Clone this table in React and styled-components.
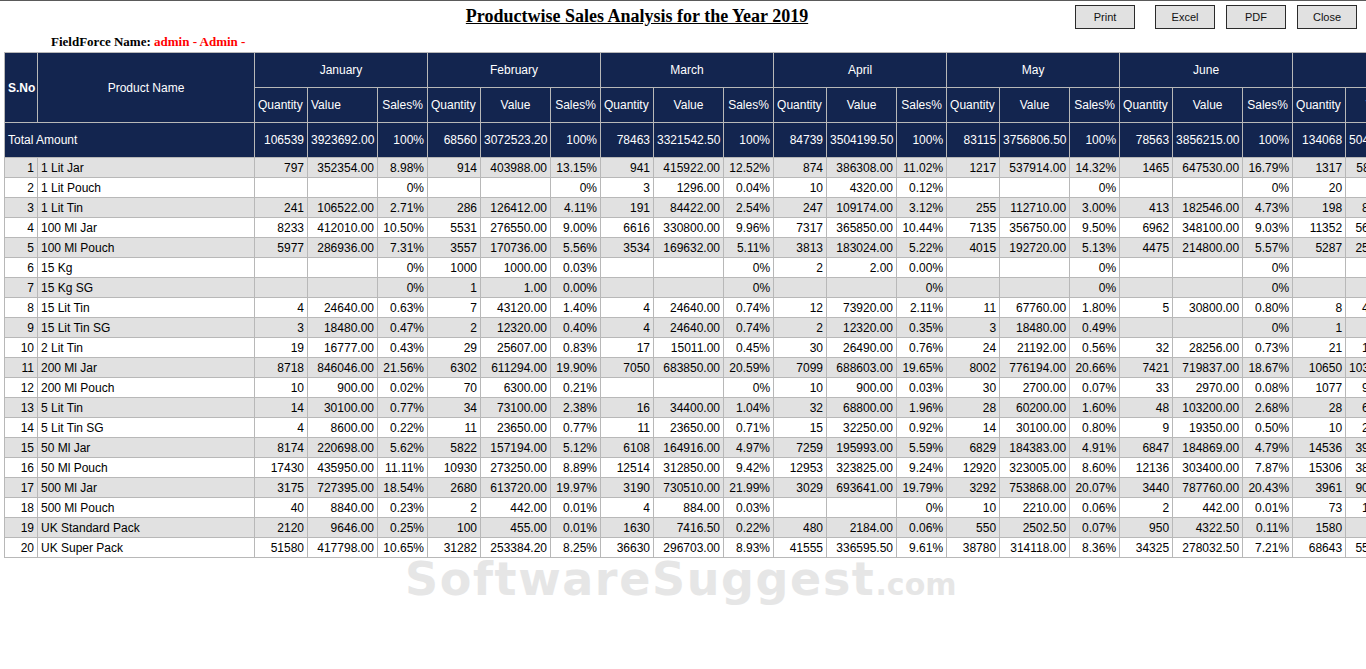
import React from 'react';
import styled, { createGlobalStyle } from 'styled-components';

const GlobalStyle = createGlobalStyle`
  html {
    overflow: hidden;
  }
  body {
    margin: 0;
    background: #ffffff;
    border-top: 1px solid #5a5a5a;
  }
`;

const MONTHS = ['January', 'February', 'March', 'April', 'May', 'June', 'July'];

const TOTALS = [
  ['106539', '3923692.00', '100%'],
  ['68560', '3072523.20', '100%'],
  ['78463', '3321542.50', '100%'],
  ['84739', '3504199.50', '100%'],
  ['83115', '3756806.50', '100%'],
  ['78563', '3856215.00', '100%'],
  ['134068', '5040398.50', '100%'],
];

const E = ['', '', '0%'];

const ROWS = [
  ['1 Lit Jar', [['797', '352354.00', '8.98%'], ['914', '403988.00', '13.15%'], ['941', '415922.00', '12.52%'], ['874', '386308.00', '11.02%'], ['1217', '537914.00', '14.32%'], ['1465', '647530.00', '16.79%'], ['1317', '582114.00', '11.55%']]],
  ['1 Lit Pouch', [E, E, ['3', '1296.00', '0.04%'], ['10', '4320.00', '0.12%'], E, E, ['20', '8640.00', '0.17%']]],
  ['1 Lit Tin', [['241', '106522.00', '2.71%'], ['286', '126412.00', '4.11%'], ['191', '84422.00', '2.54%'], ['247', '109174.00', '3.12%'], ['255', '112710.00', '3.00%'], ['413', '182546.00', '4.73%'], ['198', '87516.00', '1.74%']]],
  ['100 Ml Jar', [['8233', '412010.00', '10.50%'], ['5531', '276550.00', '9.00%'], ['6616', '330800.00', '9.96%'], ['7317', '365850.00', '10.44%'], ['7135', '356750.00', '9.50%'], ['6962', '348100.00', '9.03%'], ['11352', '567600.00', '11.26%']]],
  ['100 Ml Pouch', [['5977', '286936.00', '7.31%'], ['3557', '170736.00', '5.56%'], ['3534', '169632.00', '5.11%'], ['3813', '183024.00', '5.22%'], ['4015', '192720.00', '5.13%'], ['4475', '214800.00', '5.57%'], ['5287', '253776.00', '5.03%']]],
  ['15 Kg', [E, ['1000', '1000.00', '0.03%'], E, ['2', '2.00', '0.00%'], E, E, E]],
  ['15 Kg SG', [E, ['1', '1.00', '0.00%'], E, E, E, E, E]],
  ['15 Lit Tin', [['4', '24640.00', '0.63%'], ['7', '43120.00', '1.40%'], ['4', '24640.00', '0.74%'], ['12', '73920.00', '2.11%'], ['11', '67760.00', '1.80%'], ['5', '30800.00', '0.80%'], ['8', '49280.00', '0.98%']]],
  ['15 Lit Tin SG', [['3', '18480.00', '0.47%'], ['2', '12320.00', '0.40%'], ['4', '24640.00', '0.74%'], ['2', '12320.00', '0.35%'], ['3', '18480.00', '0.49%'], E, ['1', '6160.00', '0.12%']]],
  ['2 Lit Tin', [['19', '16777.00', '0.43%'], ['29', '25607.00', '0.83%'], ['17', '15011.00', '0.45%'], ['30', '26490.00', '0.76%'], ['24', '21192.00', '0.56%'], ['32', '28256.00', '0.73%'], ['21', '18543.00', '0.37%']]],
  ['200 Ml Jar', [['8718', '846046.00', '21.56%'], ['6302', '611294.00', '19.90%'], ['7050', '683850.00', '20.59%'], ['7099', '688603.00', '19.65%'], ['8002', '776194.00', '20.66%'], ['7421', '719837.00', '18.67%'], ['10650', '1033050.00', '20.50%']]],
  ['200 Ml Pouch', [['10', '900.00', '0.02%'], ['70', '6300.00', '0.21%'], E, ['10', '900.00', '0.03%'], ['30', '2700.00', '0.07%'], ['33', '2970.00', '0.08%'], ['1077', '96930.00', '1.92%']]],
  ['5 Lit Tin', [['14', '30100.00', '0.77%'], ['34', '73100.00', '2.38%'], ['16', '34400.00', '1.04%'], ['32', '68800.00', '1.96%'], ['28', '60200.00', '1.60%'], ['48', '103200.00', '2.68%'], ['28', '60200.00', '1.19%']]],
  ['5 Lit Tin SG', [['4', '8600.00', '0.22%'], ['11', '23650.00', '0.77%'], ['11', '23650.00', '0.71%'], ['15', '32250.00', '0.92%'], ['14', '30100.00', '0.80%'], ['9', '19350.00', '0.50%'], ['10', '21500.00', '0.43%']]],
  ['50 Ml Jar', [['8174', '220698.00', '5.62%'], ['5822', '157194.00', '5.12%'], ['6108', '164916.00', '4.97%'], ['7259', '195993.00', '5.59%'], ['6829', '184383.00', '4.91%'], ['6847', '184869.00', '4.79%'], ['14536', '392472.00', '7.79%']]],
  ['50 Ml Pouch', [['17430', '435950.00', '11.11%'], ['10930', '273250.00', '8.89%'], ['12514', '312850.00', '9.42%'], ['12953', '323825.00', '9.24%'], ['12920', '323005.00', '8.60%'], ['12136', '303400.00', '7.87%'], ['15306', '382650.00', '7.59%']]],
  ['500 Ml Jar', [['3175', '727395.00', '18.54%'], ['2680', '613720.00', '19.97%'], ['3190', '730510.00', '21.99%'], ['3029', '693641.00', '19.79%'], ['3292', '753868.00', '20.07%'], ['3440', '787760.00', '20.43%'], ['3961', '907069.00', '18.00%']]],
  ['500 Ml Pouch', [['40', '8840.00', '0.23%'], ['2', '442.00', '0.01%'], ['4', '884.00', '0.03%'], E, ['10', '2210.00', '0.06%'], ['2', '442.00', '0.01%'], ['73', '16133.00', '0.32%']]],
  ['UK Standard Pack', [['2120', '9646.00', '0.25%'], ['100', '455.00', '0.01%'], ['1630', '7416.50', '0.22%'], ['480', '2184.00', '0.06%'], ['550', '2502.50', '0.07%'], ['950', '4322.50', '0.11%'], ['1580', '7189.00', '0.14%']]],
  ['UK Super Pack', [['51580', '417798.00', '10.65%'], ['31282', '253384.20', '8.25%'], ['36630', '296703.00', '8.93%'], ['41555', '336595.50', '9.61%'], ['38780', '314118.00', '8.36%'], ['34325', '278032.50', '7.21%'], ['68643', '556008.30', '11.03%']]],
];

const Page = styled.div`
  position: relative;
  padding: 0 4px;
  min-height: 668px;
  font-family: 'Liberation Sans', Arial, sans-serif;
`;

const Header = styled.div`
  display: flex;
  align-items: flex-start;
  height: 32px;
`;

const TitleArea = styled.div`
  flex: 1;
  padding-left: 195px;
  padding-top: 5px;
  text-align: center;
`;

const Title = styled.h1`
  margin: 0;
  font-family: 'Liberation Serif', 'Times New Roman', serif;
  font-size: 18px;
  font-weight: bold;
  line-height: 21px;
  text-decoration: underline;
  color: #000;
`;

const ButtonBar = styled.div`
  display: flex;
  margin-top: 4px;
  margin-right: 5px;
`;

const Button = styled.button`
  width: 60px;
  height: 24px;
  margin-left: ${p => p.$gap}px;
  padding: 0;
  background: #e1e1e1;
  border: 1px solid #2b2b2b;
  font-family: 'Liberation Sans', Arial, sans-serif;
  font-size: 11px;
  color: #111;
  cursor: pointer;
`;

const FieldForce = styled.div`
  padding-left: 47px;
  height: 19px;
  line-height: 17px;
  font-family: 'Liberation Serif', 'Times New Roman', serif;
  font-size: 13px;
  font-weight: bold;
  color: #000;
`;

const Red = styled.span`
  color: #ff0000;
`;

const Table = styled.table`
  border-collapse: collapse;
  table-layout: fixed;
  width: 1461px;
  font-size: 12px;
  color: #000;
`;

const HeadCell = styled.th`
  height: 34px;
  padding: 0 3px;
  background: #13254f;
  color: #ffffff;
  border: 1px solid #b8b8b8;
  font-weight: ${p => (p.$bold ? 'bold' : 'normal')};
  text-align: ${p => p.$align || 'center'};
  white-space: nowrap;
  overflow: hidden;
`;

const TotalCell = styled.td`
  height: 34px;
  padding: 0 3px;
  background: #13254f;
  color: #ffffff;
  border: 1px solid #b8b8b8;
  text-align: ${p => p.$align || 'right'};
  white-space: nowrap;
  overflow: hidden;
`;

const Row = styled.tr`
  background: ${p => (p.$alt ? '#e1e1e1' : '#ffffff')};
`;

const Cell = styled.td`
  height: 19px;
  padding: 0 3px;
  border: 1px solid #b8b8b8;
  text-align: ${p => p.$align || 'right'};
  white-space: nowrap;
  overflow: hidden;
`;

const Watermark = styled.div`
  position: absolute;
  z-index: 2;
  left: 405px;
  top: 558px;
  font-family: 'DejaVu Sans', sans-serif;
  font-weight: bold;
  font-size: 46px;
  line-height: 40px;
  letter-spacing: 1.6px;
  color: #e6e6e6;
  white-space: nowrap;
  pointer-events: none;
`;

const Dotcom = styled.span`
  font-size: 30px;
  letter-spacing: 0;
`;

const App = () => {
  return (
    <>
      <GlobalStyle />
      <Page>
        <Header>
          <TitleArea>
            <Title>Productwise Sales Analysis for the Year 2019</Title>
          </TitleArea>
          <ButtonBar>
            <Button $gap={0}>Print</Button>
            <Button $gap={20}>Excel</Button>
            <Button $gap={11}>PDF</Button>
            <Button $gap={11}>Close</Button>
          </ButtonBar>
        </Header>
        <FieldForce>
          FieldForce Name: <Red>admin - Admin -</Red>
        </FieldForce>
        <Table>
          <colgroup>
            <col style={{ width: 33 }} />
            <col style={{ width: 217 }} />
            {MONTHS.map(m => (
              <React.Fragment key={m}>
                <col style={{ width: 53 }} />
                <col style={{ width: 70 }} />
                <col style={{ width: 50 }} />
              </React.Fragment>
            ))}
          </colgroup>
          <thead>
            <tr>
              <HeadCell rowSpan={2} $bold $align="left">S.No</HeadCell>
              <HeadCell rowSpan={2}>Product Name</HeadCell>
              {MONTHS.map(m => (
                <HeadCell key={m} colSpan={3}>{m}</HeadCell>
              ))}
            </tr>
            <tr>
              {MONTHS.map((m, i) => (
                <React.Fragment key={m}>
                  <HeadCell $align="left">Quantity</HeadCell>
                  <HeadCell $align={i === 0 ? 'left' : 'center'}>Value</HeadCell>
                  <HeadCell>Sales%</HeadCell>
                </React.Fragment>
              ))}
            </tr>
            <tr>
              <TotalCell colSpan={2} $align="left">Total Amount</TotalCell>
              {TOTALS.map((t, i) => (
                <React.Fragment key={i}>
                  <TotalCell>{t[0]}</TotalCell>
                  <TotalCell>{t[1]}</TotalCell>
                  <TotalCell>{t[2]}</TotalCell>
                </React.Fragment>
              ))}
            </tr>
          </thead>
          <tbody>
            {ROWS.map(([name, months], r) => (
              <Row key={name} $alt={r % 2 === 0}>
                <Cell>{r + 1}</Cell>
                <Cell $align="left">{name}</Cell>
                {months.map((v, i) => (
                  <React.Fragment key={i}>
                    <Cell>{v[0]}</Cell>
                    <Cell>{v[1]}</Cell>
                    <Cell>{v[2]}</Cell>
                  </React.Fragment>
                ))}
              </Row>
            ))}
          </tbody>
        </Table>
        <Watermark>
          SoftwareSuggest<Dotcom>.com</Dotcom>
        </Watermark>
      </Page>
    </>
  );
};

export default App;
